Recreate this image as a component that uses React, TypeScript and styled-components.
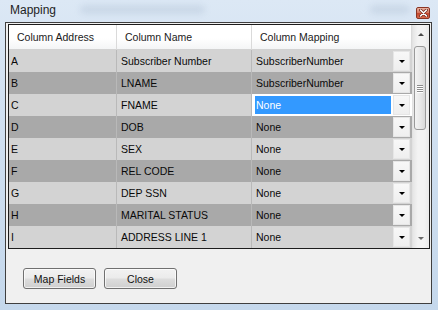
import styled, { createGlobalStyle, css } from 'styled-components';

const GlobalStyle = createGlobalStyle`
  html, body {
    margin: 0;
    padding: 0;
    background: #c6d8ec;
  }
  * { box-sizing: border-box; }
`;

type Row = { addr: string; name: string; map: string; selected?: boolean };

const rows: Row[] = [
  { addr: 'A', name: 'Subscriber Number', map: 'SubscriberNumber' },
  { addr: 'B', name: 'LNAME', map: 'SubscriberNumber' },
  { addr: 'C', name: 'FNAME', map: 'None', selected: true },
  { addr: 'D', name: 'DOB', map: 'None' },
  { addr: 'E', name: 'SEX', map: 'None' },
  { addr: 'F', name: 'REL CODE', map: 'None' },
  { addr: 'G', name: 'DEP SSN', map: 'None' },
  { addr: 'H', name: 'MARITAL STATUS', map: 'None' },
  { addr: 'I', name: 'ADDRESS LINE 1', map: 'None' },
];

const Window = styled.div`
  width: 438px;
  height: 310px;
  display: flex;
  flex-direction: column;
  padding: 0 6px 6px 5px;
  background: linear-gradient(180deg, #dce8f5 0%, #d2e1f1 30%, #c5d8ec 100%);
  font-family: 'Liberation Sans', Arial, sans-serif;
  overflow: hidden;
`;

const TitleBar = styled.div`
  position: relative;
  height: 22px;
  display: flex;
  align-items: center;
  justify-content: space-between;
  padding: 0 0 2px 5px;
`;

const Title = styled.span`
  position: relative;
  font-size: 12px;
  color: #1e1e1e;
  z-index: 1;
`;

const Haze = styled.div<{ $left: number; $width: number }>`
  position: absolute;
  top: 5px;
  left: ${(p) => p.$left}px;
  width: ${(p) => p.$width}px;
  height: 9px;
  border-radius: 5px;
  background: rgba(130, 150, 175, 0.18);
  filter: blur(3px);
`;

const CloseBox = styled.div`
  position: relative;
  z-index: 1;
  width: 14px;
  height: 12px;
  margin: 6px 2px 0 0;
  border: 1px solid #8a3524;
  border-radius: 2px;
  background: linear-gradient(180deg, #eab3a1 0%, #d97a62 45%, #c44a31 55%, #d86a4c 100%);
  display: flex;
  align-items: center;
  justify-content: center;
`;

const Client = styled.div`
  flex: 1;
  display: flex;
  flex-direction: column;
  background: #f0f0f0;
  border: 1px solid #3f3f3f;
  padding: 1px 1px 0 2px;
`;

const GridFrame = styled.div`
  display: flex;
  border: 1px solid #1c1c1c;
  background: #ffffff;
`;

const Table = styled.div`
  flex: 1;
  display: grid;
  grid-template-columns: 108px 135px 1fr;
  grid-template-rows: 25px;
  grid-auto-rows: 22px;
`;

const HeadCell = styled.div`
  display: flex;
  align-items: center;
  padding-left: 8px;
  font-size: 10.5px;
  color: #1a1a1a;
  background: linear-gradient(180deg, #ffffff 0%, #ffffff 55%, #f4f5f6 100%);
  border-right: 1px solid #dadada;
  border-bottom: 1px solid #d2d2d2;
  &:last-child { border-right: none; }
`;

const rowBg = (dark: boolean) => (dark ? '#a9a9a9' : '#d3d3d3');

const Cell = styled.div<{ $dark: boolean; $pad: number }>`
  display: flex;
  align-items: center;
  padding-left: ${(p) => p.$pad}px;
  font-size: 10.5px;
  color: #0a0a0a;
  white-space: nowrap;
  background: ${(p) => rowBg(p.$dark)};
  border-right: 1px solid #b9b9b9;
`;

const MapCell = styled.div<{ $dark: boolean; $selected?: boolean }>`
  display: flex;
  align-items: center;
  padding: 0 2px 0 3px;
  font-size: 10.5px;
  color: #0a0a0a;
  background: ${(p) => (p.$selected ? '#ffffff' : rowBg(p.$dark))};
`;

const MapValue = styled.div<{ $selected?: boolean }>`
  flex: 1;
  height: 18px;
  display: flex;
  align-items: center;
  padding-left: 1px;
  margin-right: 2px;
  ${(p) =>
    p.$selected &&
    css`
      background: #3399ff;
      color: #ffffff;
    `}
`;

const DropButton = styled.div`
  width: 17px;
  height: 20px;
  display: flex;
  align-items: center;
  justify-content: center;
  background: linear-gradient(180deg, #f8f8f8 0%, #efefef 100%);
  border: 1px solid #e6e6e6;
`;

const Arrow = styled.span<{ $dir: 'up' | 'down'; $color?: string }>`
  width: 0;
  height: 0;
  border-left: 3px solid transparent;
  border-right: 3px solid transparent;
  ${(p) =>
    p.$dir === 'down'
      ? css`border-top: 3px solid ${p.$color || '#000'};`
      : css`border-bottom: 3px solid ${p.$color || '#000'};`}
`;

const ScrollBar = styled.div`
  width: 17px;
  display: flex;
  flex-direction: column;
  background: linear-gradient(90deg, #e6e6e6 0%, #f3f3f3 30%, #f3f3f3 70%, #e9e9e9 100%);
  border-left: 1px solid #e2e2e2;
`;

const ScrollArrow = styled.div`
  height: 19px;
  display: flex;
  align-items: center;
  justify-content: center;
`;

const Thumb = styled.div`
  height: 84px;
  margin: 2px 3px 0 1px;
  border: 1px solid #9a9a9a;
  border-radius: 3px;
  background: linear-gradient(90deg, #f4f4f4 0%, #e9e9e9 50%, #d9d9d9 100%);
  display: flex;
  flex-direction: column;
  align-items: center;
  justify-content: center;
  gap: 1px;
`;

const Grip = styled.span`
  width: 6px;
  height: 1px;
  background: #8c8c8c;
  box-shadow: 0 1px 0 #ffffff;
`;

const Track = styled.div`
  flex: 1;
`;

const Footer = styled.div`
  display: flex;
  gap: 8px;
  padding: 19px 0 0 15px;
`;

const Button = styled.button`
  width: 73px;
  height: 21px;
  padding: 0;
  font-family: 'Liberation Sans', Arial, sans-serif;
  font-size: 10.5px;
  color: #111;
  border: 1px solid #707070;
  border-radius: 3px;
  background: linear-gradient(180deg, #f2f2f2 0%, #ebebeb 48%, #dddddd 52%, #cfcfcf 100%);
  box-shadow: inset 0 0 0 1px rgba(255, 255, 255, 0.7);
`;

export default function App() {
  return (
    <>
      <GlobalStyle />
      <Window>
        <TitleBar>
          <Haze $left={75} $width={125} />
          <Haze $left={365} $width={40} />
          <Title>Mapping</Title>
          <CloseBox>
            <svg width="9" height="8" viewBox="0 0 9 8">
              <path d="M1.5 1 L7.5 7 M7.5 1 L1.5 7" stroke="#6b2516" strokeWidth="3" strokeLinecap="round" />
              <path d="M1.5 1 L7.5 7 M7.5 1 L1.5 7" stroke="#ffffff" strokeWidth="1.6" strokeLinecap="round" />
            </svg>
          </CloseBox>
        </TitleBar>
        <Client>
          <GridFrame>
            <Table>
              <HeadCell>Column Address</HeadCell>
              <HeadCell>Column Name</HeadCell>
              <HeadCell>Column Mapping</HeadCell>
              {rows.map((r, i) => {
                const dark = i % 2 === 1;
                return [
                  <Cell key={r.addr + 'a'} $dark={dark} $pad={2}>
                    {r.addr}
                  </Cell>,
                  <Cell key={r.addr + 'n'} $dark={dark} $pad={4}>
                    {r.name}
                  </Cell>,
                  <MapCell key={r.addr + 'm'} $dark={dark} $selected={r.selected}>
                    <MapValue $selected={r.selected}>{r.map}</MapValue>
                    <DropButton>
                      <Arrow $dir="down" />
                    </DropButton>
                  </MapCell>,
                ];
              })}
            </Table>
            <ScrollBar>
              <ScrollArrow>
                <Arrow $dir="up" $color="#4a4a4a" />
              </ScrollArrow>
              <Thumb>
                <Grip />
                <Grip />
                <Grip />
                <Grip />
              </Thumb>
              <Track />
              <ScrollArrow>
                <Arrow $dir="down" $color="#6a6a6a" />
              </ScrollArrow>
            </ScrollBar>
          </GridFrame>
          <Footer>
            <Button>Map Fields</Button>
            <Button>Close</Button>
          </Footer>
        </Client>
      </Window>
    </>
  );
}
